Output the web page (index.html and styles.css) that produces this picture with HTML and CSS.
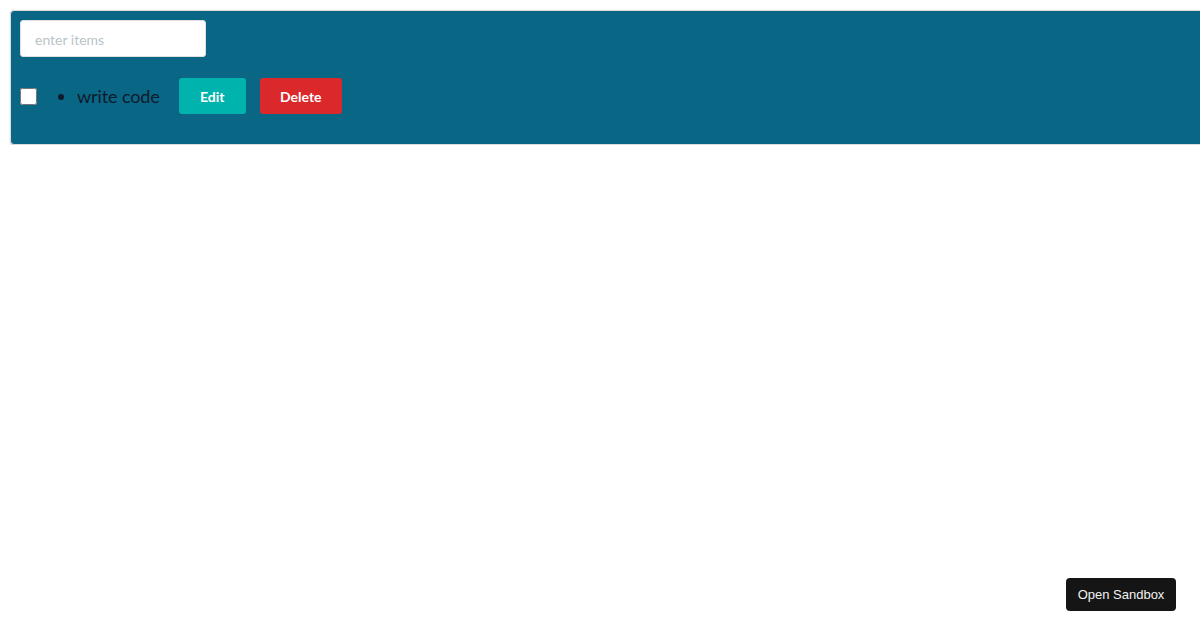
FILE: index.html
```html
<!DOCTYPE html>
<html>
<head>
<meta charset="utf-8">
<link rel="stylesheet" href="styles.css">
</head>
<body>
<div class="panel">
  <input class="item-input" type="text" placeholder="enter items">
  <div class="row">
    <input class="check" type="checkbox">
    <ul class="list"><li>write code</li></ul>
    <button class="btn btn-edit">Edit</button>
    <button class="btn btn-delete">Delete</button>
  </div>
</div>
<button class="sandbox">Open Sandbox</button>
</body>
</html>
```
FILE: styles.css
```css
html, body {
  margin: 0;
  overflow: hidden;
  background: #fff;
  font-family: Lato, "Liberation Sans", sans-serif;
}
.panel {
  margin: 10px -20px 0 10px;
  background: #0a6685;
  border: 1px solid #dcdcdc;
  border-radius: 4px;
  padding: 9px 9px 30px 9px;
  box-shadow: 0 1px 2px rgba(0,0,0,0.12);
}
.item-input {
  display: block;
  box-sizing: border-box;
  width: 186px;
  height: 37px;
  border: 1px solid #e0e0e0;
  border-radius: 3px;
  padding: 1px 14px 0;
  font-family: Lato, sans-serif;
  font-size: 14px;
  color: #333;
  outline: none;
}
.item-input::placeholder { color: #b8c4c8; }
.row {
  display: flex;
  align-items: center;
  margin-top: 21px;
  height: 36px;
}
.check {
  width: 17px;
  height: 17px;
  margin: 0;
}
.list {
  margin: 0;
  padding: 0 0 0 40px;
  font-size: 18px;
  color: #0e1a2b;
  letter-spacing: -0.1px;
}
.btn {
  height: 36px;
  border: none;
  border-radius: 3px;
  color: #fff;
  font-family: Lato, sans-serif;
  font-weight: bold;
  font-size: 14px;
  cursor: pointer;
}
.btn-edit {
  margin-left: 19px;
  width: 67px;
  background: #00b3ad;
}
.btn-delete {
  margin-left: 14px;
  width: 82px;
  background: #db282b;
}
.sandbox {
  position: fixed;
  left: 1066px;
  top: 578px;
  width: 110px;
  height: 33px;
  background: #151515;
  color: #f2f2f2;
  border: none;
  border-radius: 4px;
  font-family: "Liberation Sans", Arial, sans-serif;
  font-size: 13px;
  padding: 0;
}
```
